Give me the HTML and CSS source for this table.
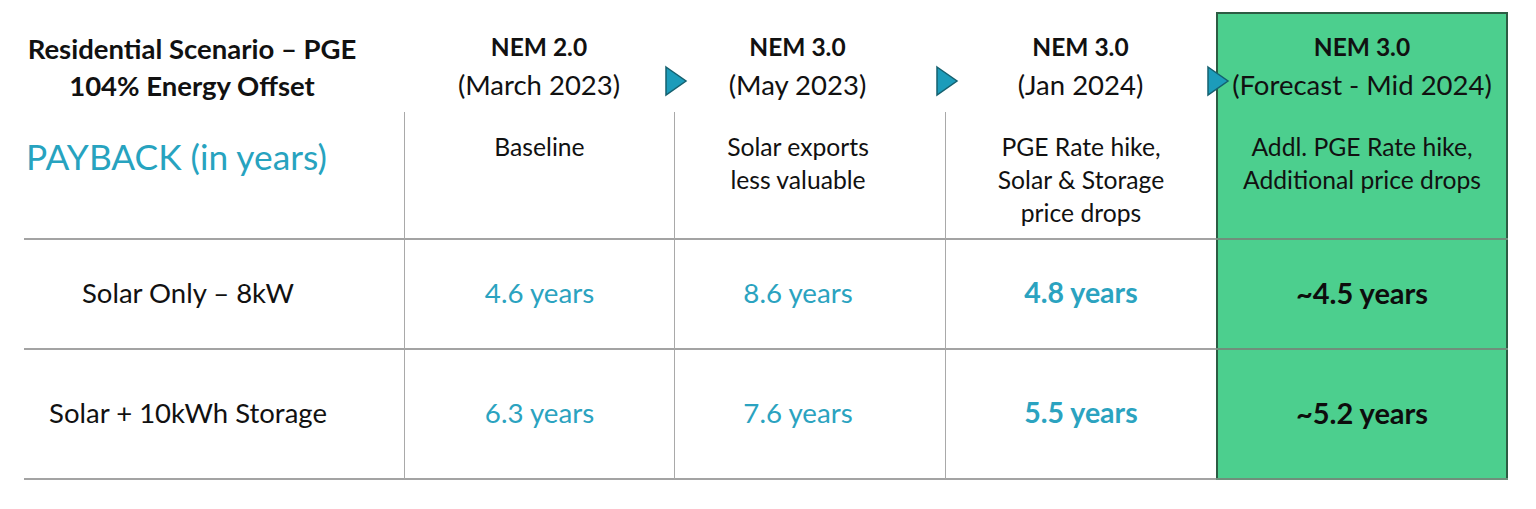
FILE: index.html
```html
<!DOCTYPE html>
<html lang="en">
<head>
<meta charset="utf-8">
<title>NEM Payback</title>
<link rel="stylesheet" href="styles.css">
</head>
<body>
<div class="table">
  <div class="highlight"></div>

  <div class="cell head first">
    <div class="title">Residential Scenario – PGE<br>104% Energy Offset</div>
  </div>
  <div class="cell head c2">
    <div class="h-main">NEM 2.0</div>
    <div class="h-sub">(March 2023)</div>
    <svg class="arrow" viewBox="0 0 24 32" width="24" height="32"><path d="M2 2 L22 16 L2 30 Z"/></svg>
  </div>
  <div class="cell head c3">
    <div class="h-main">NEM 3.0</div>
    <div class="h-sub">(May 2023)</div>
    <svg class="arrow" viewBox="0 0 24 32" width="24" height="32"><path d="M2 2 L22 16 L2 30 Z"/></svg>
  </div>
  <div class="cell head c4">
    <div class="h-main">NEM 3.0</div>
    <div class="h-sub">(Jan 2024)</div>
    <svg class="arrow" viewBox="0 0 24 32" width="24" height="32"><path d="M2 2 L22 16 L2 30 Z"/></svg>
  </div>
  <div class="cell head c5">
    <div class="h-main">NEM 3.0</div>
    <div class="h-sub">(Forecast - Mid 2024)</div>
  </div>

  <div class="cell desc first payback">PAYBACK (in years)</div>
  <div class="cell desc line c2">Baseline</div>
  <div class="cell desc line c3">Solar exports<br>less valuable</div>
  <div class="cell desc line c4">PGE Rate hike,<br>Solar &amp; Storage<br>price drops</div>
  <div class="cell desc line c5">Addl. PGE Rate hike,<br>Additional price drops</div>

  <div class="cell row r1 first label">Solar Only – 8kW</div>
  <div class="cell row r1 line c2 val">4.6 years</div>
  <div class="cell row r1 line c3 val">8.6 years</div>
  <div class="cell row r1 line c4 val bold">4.8 years</div>
  <div class="cell row r1 line c5 val green">~4.5 years</div>

  <div class="cell row r2 first label">Solar + 10kWh Storage</div>
  <div class="cell row r2 line c2 val">6.3 years</div>
  <div class="cell row r2 line c3 val">7.6 years</div>
  <div class="cell row r2 line c4 val bold">5.5 years</div>
  <div class="cell row r2 line c5 val green">~5.2 years</div>
</div>
</body>
</html>
```
FILE: styles.css
```css
html, body {
  margin: 0;
  padding: 0;
  background: #ffffff;
}

body {
  font-family: "Lato", "Open Sans", sans-serif;
  color: #111111;
}

.table {
  display: grid;
  grid-template-columns: 380px 270px 271px 271px 292px;
  grid-template-rows: 100px 128px 110px 130px;
  padding: 12px 0 0 24px;
  width: 1484px;
}

.highlight {
  grid-column: 5;
  grid-row: 1 / span 4;
  background: #4ccf8e;
  border: 2px solid #2c5c43;
  margin-bottom: -2px;
  z-index: 0;
}

.cell {
  position: relative;
  z-index: 1;
  text-align: center;
  box-sizing: border-box;
}

.c2 { grid-column: 2; }
.c3 { grid-column: 3; padding-right: 24px; }
.c4 { grid-column: 4; }
.c5 { grid-column: 5; }
.first { grid-column: 1; }

.head { grid-row: 1; padding-top: 16px; }
.desc { grid-row: 2; }
.r1 { grid-row: 3; }
.r2 { grid-row: 4; }

.title {
  font-weight: 700;
  font-size: 27.5px;
  line-height: 37px;
  padding-right: 44px;
  margin-top: 2px;
  white-space: nowrap;
}

.h-main {
  font-weight: 700;
  font-size: 24.5px;
  line-height: 38px;
}

.h-sub {
  font-size: 27.5px;
  line-height: 38px;
}

.arrow {
  position: absolute;
  top: 53px;
  right: -14px;
  overflow: visible;
}

.arrow path {
  fill: #1c9cba;
  stroke: #15606f;
  stroke-width: 1.5;
  stroke-linejoin: miter;
}

.desc, .row {
  border-bottom: 2px solid #a3a3a3;
}

.line {
  border-left: 1px solid #a9a9a9;
}

.c5.line {
  border-left: none;
}

.c5.desc, .c5.row {
  border-bottom-color: #6f8f7b;
}

.desc {
  font-size: 24.7px;
  line-height: 33px;
  padding-top: 18px;
}

.payback {
  text-align: left;
  color: #27a3bf;
  font-size: 35.3px;
  line-height: 40px;
  padding-top: 25px;
  padding-left: 2px;
}

.row {
  display: flex;
  align-items: center;
  justify-content: center;
  font-size: 27.5px;
  padding-bottom: 4px;
}

.label {
  padding-right: 52px;
}

.val {
  color: #2ba3c0;
  font-size: 27.7px;
}

.val.bold {
  font-weight: 700;
  font-size: 28.5px;
}

.val.green {
  color: #0d0d0d;
  font-weight: 700;
  font-size: 29px;
}
```
